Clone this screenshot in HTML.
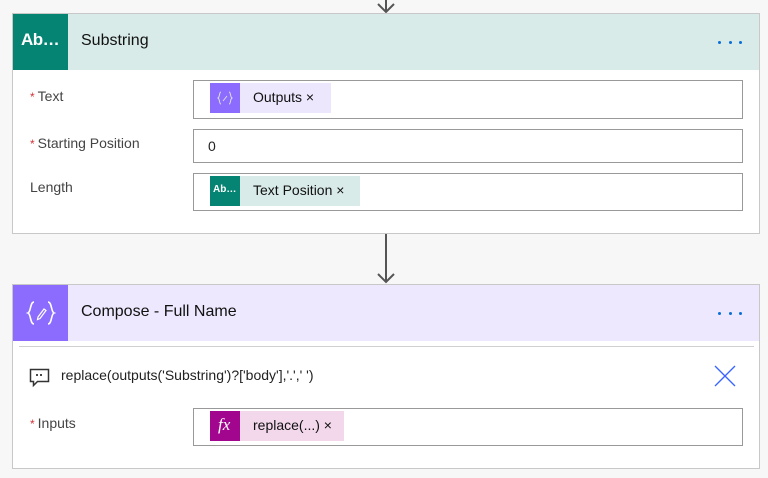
<!DOCTYPE html>
<html><head><style>
body{margin:0;width:768px;height:478px;background:#f7f7f7;font-family:"Segoe UI","Liberation Sans",sans-serif;position:relative;overflow:hidden;color:#222}
.a{position:absolute}
.card{position:absolute;left:12px;width:748px;border:1px solid #c8c8c8;background:#fff;box-sizing:border-box}
.hdr{position:absolute;left:0;top:0;width:100%;height:56px}
.ico{position:absolute;left:0;top:0;width:55px;height:56px;color:#fff}
.title{position:absolute;left:68px;top:18px;font-size:16px;color:#111}
.dots{position:absolute;right:13px;top:27px;width:28px;height:4px}
.dots i{position:absolute;top:0;width:3px;height:3px;border-radius:50%;background:#0a6fd6}
.lbl{position:absolute;left:17px;font-size:14px;color:#444}
.lbl b{color:#d13438;font-weight:normal;font-size:12px;margin-right:3px}
.box{position:absolute;left:180px;width:550px;border:1px solid #999;box-sizing:border-box;background:#fff}
.tok{position:absolute;left:16px;top:2px;height:30px;font-size:14px;color:#111}
.tok .ti{position:absolute;left:0;top:0;width:30px;height:30px;color:#fff}
.tok .tt{position:absolute;left:43px;top:6px;white-space:nowrap}
</style></head><body>
<svg class="a" style="left:372px;top:0" width="30" height="14"><path d="M14 0v12M6 4l8 8 8-8" stroke="#555" stroke-width="2" fill="none"/></svg>
<div class="card" style="top:13px;height:221px">
 <div class="hdr" style="background:#d9ebe9">
  <div class="ico" style="background:#068473"><span class="a" style="left:8px;top:16px;font-size:17px;font-weight:bold;letter-spacing:-0.5px">Ab…</span></div>
  <div class="title">Substring</div>
  <div class="dots"><i style="left:0"></i><i style="left:11px"></i><i style="left:21px"></i></div>
 </div>
 <div class="lbl" style="top:74px"><b>*</b>Text</div>
 <div class="box" style="top:66px;height:39px"><div class="tok" style="width:121px;background:#ede7fd"><div class="ti" style="background:#8c6cff"><svg class="a" style="left:7px;top:8px" width="16" height="14"><path d="M4 1c-2 0-1 5-3 6 2 1 1 6 3 6M12 1c2 0 1 5 3 6-2 1-1 6-3 6M6 10l4-5" stroke="#ddd" stroke-width="1" fill="none"/></svg></div><span class="tt">Outputs ×</span></div></div>
 <div class="lbl" style="top:121px"><b>*</b>Starting Position</div>
 <div class="box" style="top:115px;height:34px"><span class="a" style="left:14px;top:8px;font-size:14px">0</span></div>
 <div class="lbl" style="top:165px">Length</div>
 <div class="box" style="top:159px;height:38px"><div class="tok" style="width:150px;background:#d9ebe9"><div class="ti" style="background:#068473"><span class="a" style="left:3px;top:8px;font-size:10px;font-weight:bold">Ab…</span></div><span class="tt">Text Position ×</span></div></div>
</div>
<svg class="a" style="left:372px;top:234px" width="30" height="50"><path d="M14 0v48M6 40l8 8 8-8" stroke="#555" stroke-width="2" fill="none"/></svg>
<div class="card" style="top:284px;height:185px">
 <div class="hdr" style="background:#ede8fd">
  <div class="ico" style="background:#8c6cff"><svg class="a" style="left:13px;top:16px" width="30" height="24"><path d="M8 1c-4 0-3 10-6 11 3 1 2 11 6 11M22 1c4 0 3 10 6 11-3 1-2 11-6 11" stroke="#fff" stroke-width="1.6" fill="none"/><path d="M12 16l6-8 2 1.5-6 8-2.5 1z" stroke="#fff" stroke-width="1.2" fill="none"/></svg></div>
  <div class="title">Compose - Full Name</div>
  <div class="dots"><i style="left:0"></i><i style="left:11px"></i><i style="left:21px"></i></div>
 </div>
 <div class="a" style="left:6px;top:61px;width:735px;height:1px;background:#d0d0d0"></div>
 <svg class="a" style="left:16px;top:83px" width="22" height="20"><path d="M1.5 1.5h18v12h-11l-4 4v-4h-3z" fill="none" stroke="#333" stroke-width="1.5"/><path d="M8 6v2M12 6v2" stroke="#333" stroke-width="1.8"/></svg>
 <span class="a" style="left:48px;top:82px;font-size:14px">replace(outputs('Substring')?['body'],'.',' ')</span>
 <svg class="a" style="left:701px;top:80px" width="22" height="22"><path d="M1 1l20 20M21 1L1 21" stroke="#3a66ff" stroke-width="1.4"/></svg>
 <div class="lbl" style="top:130px"><b>*</b>Inputs</div>
 <div class="box" style="top:123px;height:38px"><div class="tok" style="width:134px;background:#f3d8ec"><div class="ti" style="background:#a3068e"><span class="a" style="left:8px;top:4px;font-size:17px;font-style:italic;font-family:'Liberation Serif',serif">fx</span></div><span class="tt">replace(...) ×</span></div></div>
</div>
</body></html>
